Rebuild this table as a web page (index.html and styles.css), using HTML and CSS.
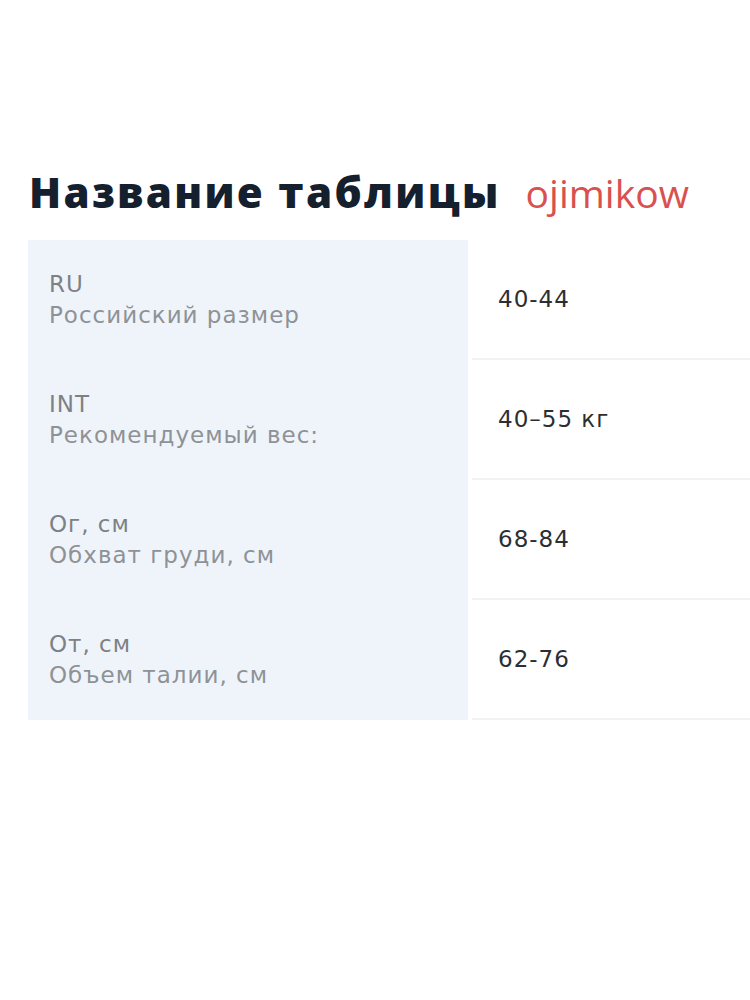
FILE: index.html
```html
<!DOCTYPE html>
<html lang="ru">
<head>
<meta charset="utf-8">
<link rel="stylesheet" href="styles.css">
</head>
<body>
<div class="page">
  <div class="heading">
    <h1 class="title">Название таблицы</h1>
    <span class="brand">ojimikow</span>
  </div>
  <div class="table">
    <div class="row">
      <div class="label"><div class="code">RU</div><div class="desc">Российский размер</div></div>
      <div class="value">40-44</div>
    </div>
    <div class="row">
      <div class="label"><div class="code">INT</div><div class="desc">Рекомендуемый вес:</div></div>
      <div class="value">40–55 кг</div>
    </div>
    <div class="row">
      <div class="label"><div class="code">Ог, см</div><div class="desc">Обхват груди, см</div></div>
      <div class="value">68-84</div>
    </div>
    <div class="row">
      <div class="label"><div class="code">От, см</div><div class="desc">Объем талии, см</div></div>
      <div class="value">62-76</div>
    </div>
  </div>
</div>
</body>
</html>
```
FILE: styles.css
```css
html, body {
  margin: 0;
  padding: 0;
  background: #ffffff;
}
.page {
  width: 750px;
  height: 1000px;
  overflow: hidden;
  padding-top: 163px;
  box-sizing: border-box;
}
.heading {
  display: flex;
  align-items: baseline;
  gap: 25px;
  padding-left: 29px;
  height: 77px;
}
.title {
  margin: 0;
  font-family: "Open Sans", "DejaVu Sans", sans-serif;
  font-weight: 800;
  font-size: 42px;
  color: #14202e;
  letter-spacing: 2.3px;
}
.brand {
  font-family: "Open Sans", sans-serif;
  font-weight: 400;
  font-size: 39px;
  color: #d9514e;
}
.table {
  display: flex;
  flex-direction: column;
  margin-left: 28px;
}
.row {
  display: grid;
  grid-template-columns: 440px 1fr;
  column-gap: 4px;
  height: 120px;
}
.label {
  background: #eff4fb;
  display: flex;
  flex-direction: column;
  justify-content: center;
  padding-left: 21px;
  font-family: "DejaVu Sans", Verdana, sans-serif;
  font-size: 23px;
  line-height: 31px;
  letter-spacing: 1px;
}
.code {
  color: #7d8185;
}
.desc {
  color: #8e9296;
}
.value {
  display: flex;
  align-items: center;
  padding-left: 26px;
  font-family: "DejaVu Sans", Verdana, sans-serif;
  font-size: 23px;
  letter-spacing: 1px;
  color: #2b2f33;
  border-bottom: 2px solid #f1f2f4;
  box-sizing: border-box;
}
```
